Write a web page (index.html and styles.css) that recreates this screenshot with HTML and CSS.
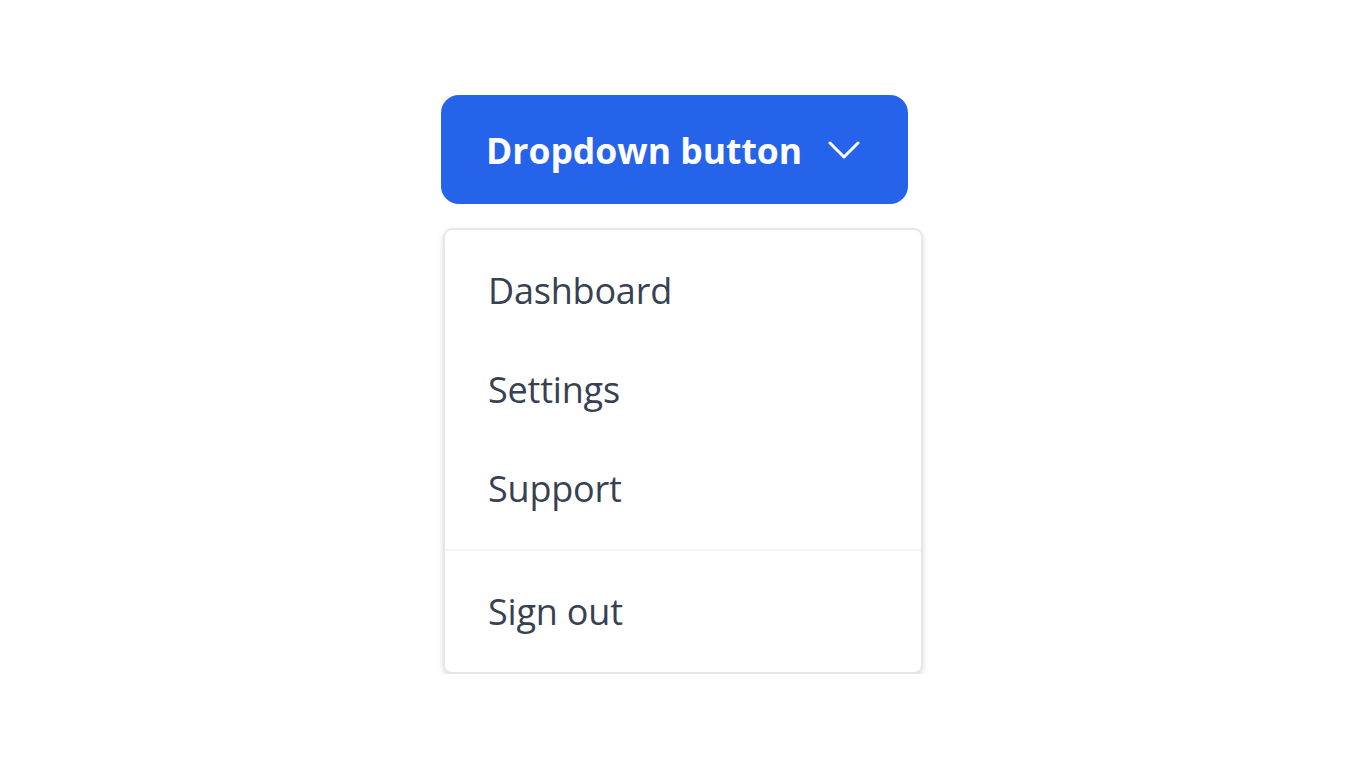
FILE: index.html
```html
<!DOCTYPE html>
<html lang="en">
<head>
<meta charset="utf-8">
<title>Dropdown</title>
<link rel="stylesheet" href="styles.css">
</head>
<body>
<div class="page">
  <div class="dropdown">
    <button class="dd-button" type="button">
      <span class="label">Dropdown button</span>
      <svg class="chev" width="32" height="20" viewBox="0 0 32 20" fill="none" stroke="#ffffff" stroke-width="3" stroke-linecap="round" stroke-linejoin="round"><path d="M2 3 L16 17 L30 3"/></svg>
    </button>
    <div class="menu">
      <div class="group">
        <a class="item">Dashboard</a>
        <a class="item">Settings</a>
        <a class="item">Support</a>
      </div>
      <div class="group">
        <a class="item">Sign out</a>
      </div>
    </div>
  </div>
</div>
</body>
</html>
```
FILE: styles.css
```css
html, body {
  margin: 0;
  padding: 0;
  background: #ffffff;
}
body {
  font-family: "Open Sans", "Noto Sans", sans-serif;
}
.page {
  display: flex;
  justify-content: center;
  padding-top: 95px;
}
.dropdown {
  width: 484px;
  display: flex;
  flex-direction: column;
  align-items: flex-start;
}
.dd-button {
  display: inline-flex;
  align-items: center;
  justify-content: flex-start;
  gap: 26px;
  height: 109px;
  width: 467px;
  box-sizing: border-box;
  padding: 0 0 0 45px;
  background: #2563eb;
  color: #ffffff;
  border: none;
  border-radius: 18px;
  font-family: "Open Sans", "Noto Sans", sans-serif;
  font-weight: 700;
  font-size: 35.5px;
  letter-spacing: 0;
  white-space: nowrap;
}
.label {
  white-space: nowrap;
}
.chev {
  display: block;
  flex: none;
}
.menu {
  margin-top: 24px;
  margin-left: 2px;
  width: 480px;
  box-sizing: border-box;
  border: 2px solid #e5e7eb;
  border-radius: 9px;
  background: #ffffff;
  box-shadow: 0 4px 7px rgba(0,0,0,0.1), 0 2px 4px rgba(0,0,0,0.05);
}
.group {
  padding: 11px 0;
}
.group + .group {
  border-top: 2px solid #f3f4f6;
}
.item {
  display: flex;
  align-items: center;
  height: 99px;
  padding-left: 43px;
  color: #374151;
  font-size: 36px;
  letter-spacing: -0.2px;
}
```
